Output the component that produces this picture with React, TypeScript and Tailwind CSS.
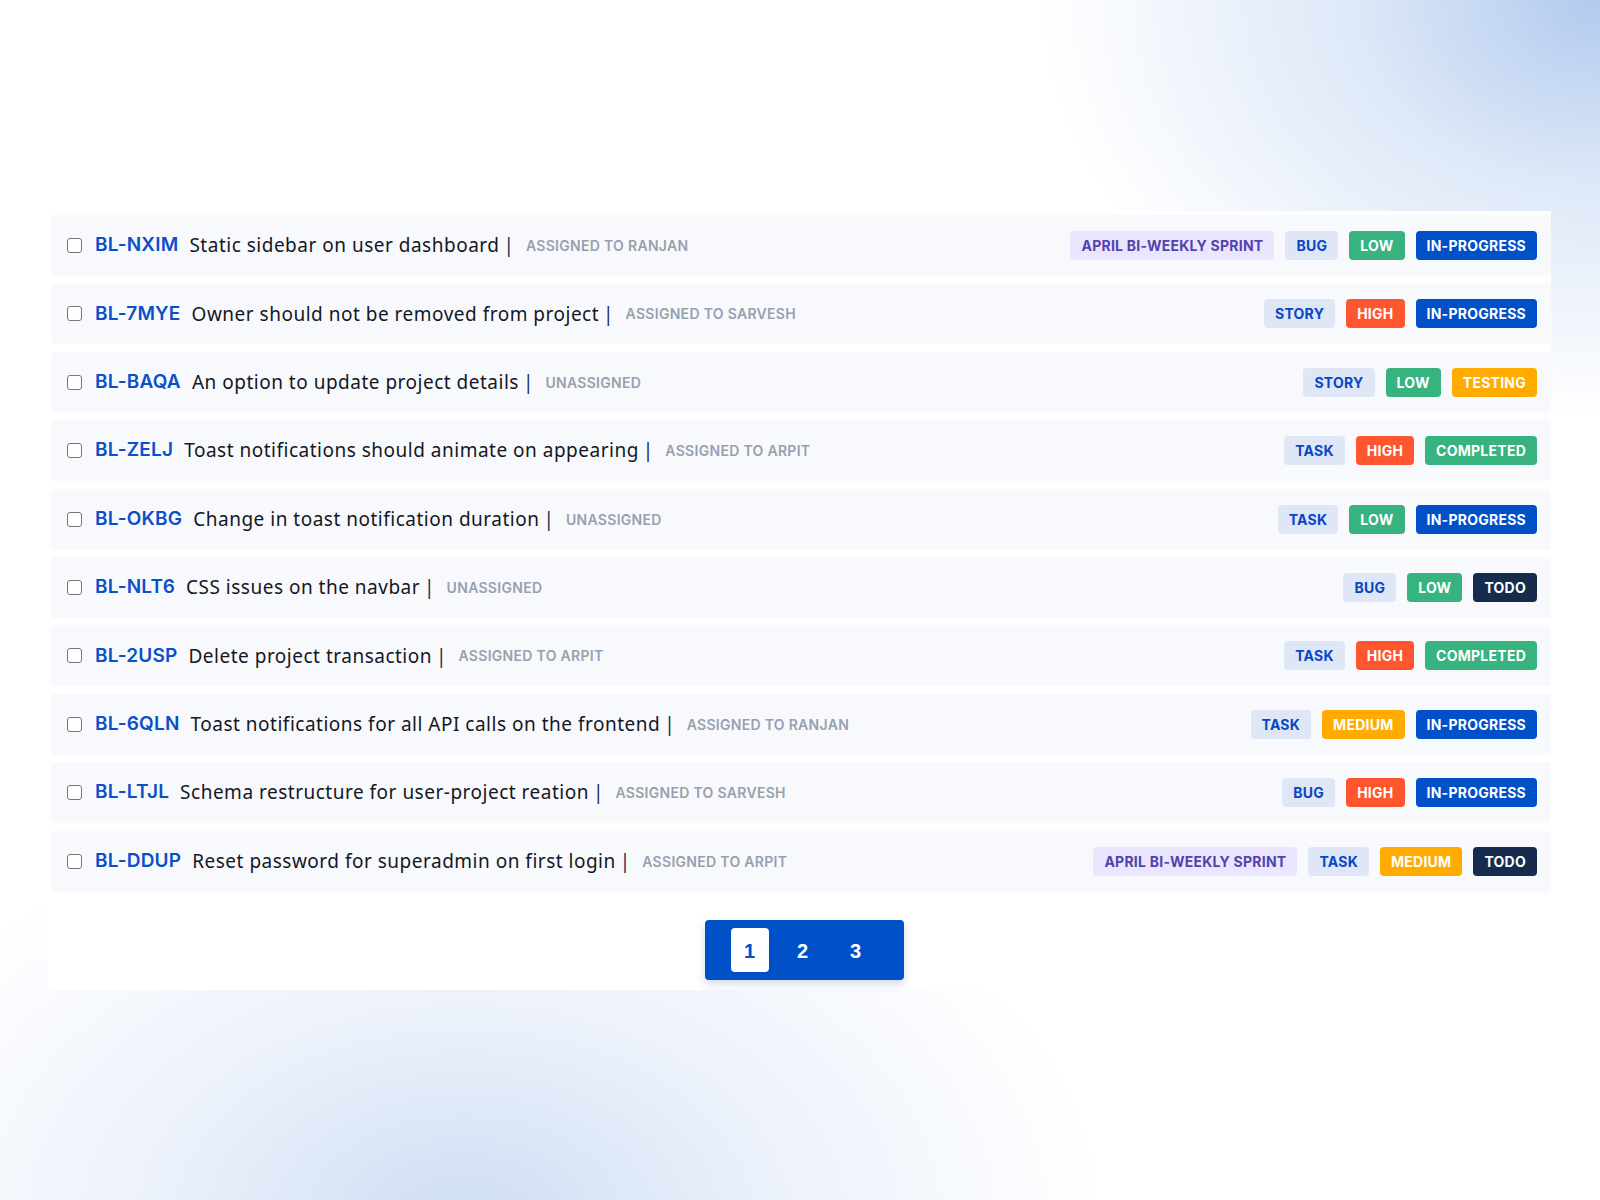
import React from "react";

type Badge = { label: string; kind: "sprint" | "type" | "low" | "high" | "medium" | "progress" | "testing" | "completed" | "todo" };

type Issue = { id: string; title: string; assignee: string; badges: Badge[] };

const issues: Issue[] = [
  { id: "BL-NXIM", title: "Static sidebar on user dashboard", assignee: "ASSIGNED TO RANJAN", badges: [{ label: "APRIL BI-WEEKLY SPRINT", kind: "sprint" }, { label: "BUG", kind: "type" }, { label: "LOW", kind: "low" }, { label: "IN-PROGRESS", kind: "progress" }] },
  { id: "BL-7MYE", title: "Owner should not be removed from project", assignee: "ASSIGNED TO SARVESH", badges: [{ label: "STORY", kind: "type" }, { label: "HIGH", kind: "high" }, { label: "IN-PROGRESS", kind: "progress" }] },
  { id: "BL-BAQA", title: "An option to update project details", assignee: "UNASSIGNED", badges: [{ label: "STORY", kind: "type" }, { label: "LOW", kind: "low" }, { label: "TESTING", kind: "testing" }] },
  { id: "BL-ZELJ", title: "Toast notifications should animate on appearing", assignee: "ASSIGNED TO ARPIT", badges: [{ label: "TASK", kind: "type" }, { label: "HIGH", kind: "high" }, { label: "COMPLETED", kind: "completed" }] },
  { id: "BL-OKBG", title: "Change in toast notification duration", assignee: "UNASSIGNED", badges: [{ label: "TASK", kind: "type" }, { label: "LOW", kind: "low" }, { label: "IN-PROGRESS", kind: "progress" }] },
  { id: "BL-NLT6", title: "CSS issues on the navbar", assignee: "UNASSIGNED", badges: [{ label: "BUG", kind: "type" }, { label: "LOW", kind: "low" }, { label: "TODO", kind: "todo" }] },
  { id: "BL-2USP", title: "Delete project transaction", assignee: "ASSIGNED TO ARPIT", badges: [{ label: "TASK", kind: "type" }, { label: "HIGH", kind: "high" }, { label: "COMPLETED", kind: "completed" }] },
  { id: "BL-6QLN", title: "Toast notifications for all API calls on the frontend", assignee: "ASSIGNED TO RANJAN", badges: [{ label: "TASK", kind: "type" }, { label: "MEDIUM", kind: "medium" }, { label: "IN-PROGRESS", kind: "progress" }] },
  { id: "BL-LTJL", title: "Schema restructure for user-project reation", assignee: "ASSIGNED TO SARVESH", badges: [{ label: "BUG", kind: "type" }, { label: "HIGH", kind: "high" }, { label: "IN-PROGRESS", kind: "progress" }] },
  { id: "BL-DDUP", title: "Reset password for superadmin on first login", assignee: "ASSIGNED TO ARPIT", badges: [{ label: "APRIL BI-WEEKLY SPRINT", kind: "sprint" }, { label: "TASK", kind: "type" }, { label: "MEDIUM", kind: "medium" }, { label: "TODO", kind: "todo" }] },
];

const badgeClass: Record<Badge["kind"], string> = {
  sprint: "bg-[#eae6ff] text-[#5243aa]",
  type: "bg-[#dfe6f5] text-[#0747c6]",
  low: "bg-[#36b37e] text-white",
  high: "bg-[#ff5630] text-white",
  medium: "bg-[#ffab00] text-white",
  testing: "bg-[#ffab00] text-white",
  progress: "bg-[#0050c8] text-white",
  completed: "bg-[#36b37e] text-white",
  todo: "bg-[#172b4d] text-white",
};

function Row({ issue }: { issue: Issue }) {
  return (
    <div className="flex h-[61px] items-center rounded-[4px] bg-[#f8f9fc] pl-[16px] pr-[14px]">
      <div className="h-[15px] w-[15px] shrink-0 rounded-[3px] border border-[#767676] bg-white" />
      <span className="ml-[13px] text-[19px] font-semibold tracking-[0.2px] text-[#0b4fc9]">{issue.id}</span>
      <span className="ml-[11px] text-[19px] text-[#14171f] tracking-[0.5px]" style={{ fontFamily: "'Noto Sans', sans-serif" }}>
        {issue.title}
      </span>
      <span className="ml-[4px] text-[19px] text-[#172b4d]" style={{ fontFamily: "'Noto Sans', sans-serif" }}>|</span>
      <span className="ml-[12px] text-[14px] font-semibold tracking-[0.3px] text-[#97a0af]">{issue.assignee}</span>
      <div className="ml-auto flex items-center gap-[11px]">
        {issue.badges.map((b, i) => (
          <span
            key={i}
            className={`flex h-[29px] items-center rounded-[4px] px-[11px] text-[14px] font-bold tracking-[0.25px] ${badgeClass[b.kind]}`}
          >
            {b.label}
          </span>
        ))}
      </div>
    </div>
  );
}

export default function App() {
  return (
    <div
      className="relative min-h-[1200px] w-full overflow-hidden bg-white bg-[radial-gradient(ellipse_560px_420px_at_100%_0%,#b2caee_0%,rgba(196,214,242,0.55)_45%,rgba(255,255,255,0)_100%),radial-gradient(ellipse_640px_430px_at_29%_102%,#cddcf3_0%,rgba(220,230,247,0.6)_45%,rgba(255,255,255,0)_100%)] pt-[211px]"
      style={{ fontFamily: "Inter, 'Noto Sans', sans-serif" }}
    >
      <div className="ml-[47px] w-[1504px] bg-white pl-[4px] pt-[4px] pb-[10px]">
        <div className="flex flex-col gap-[7.4px]">
          {issues.map((it) => (
            <Row key={it.id} issue={it} />
          ))}
        </div>
        <div className="mt-[28px] flex justify-center pl-[6px]">
          <div className="flex h-[60px] items-center gap-[15px] rounded-[4px] bg-[#0050c8] pl-[26px] pr-[29px] shadow-[0_4px_10px_rgba(0,40,120,0.18)]">
            <span className="flex h-[44px] w-[38px] items-center justify-center rounded-[4px] bg-white pt-[3px] text-[20px] font-bold text-[#0050c8]" style={{ fontFamily: "'Liberation Sans', Arial, sans-serif" }}>1</span>
            <span className="flex h-[44px] w-[38px] items-center justify-center pt-[3px] text-[20px] font-bold text-white" style={{ fontFamily: "'Liberation Sans', Arial, sans-serif" }}>2</span>
            <span className="flex h-[44px] w-[38px] items-center justify-center pt-[3px] text-[20px] font-bold text-white" style={{ fontFamily: "'Liberation Sans', Arial, sans-serif" }}>3</span>
          </div>
        </div>
      </div>
    </div>
  );
}
